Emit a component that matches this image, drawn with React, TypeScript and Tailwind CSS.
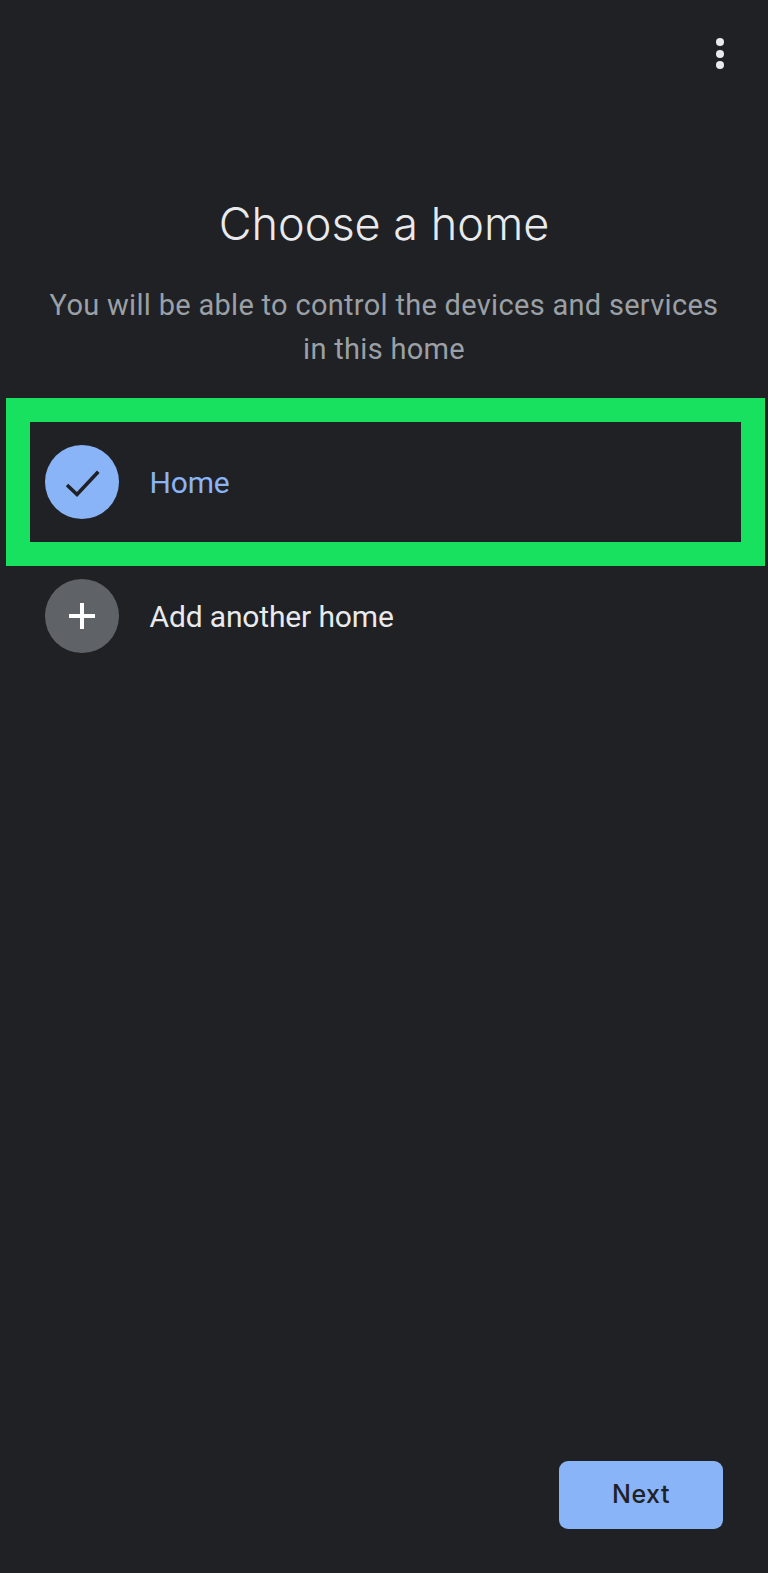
export default function App() {
  return (
    <div className="flex h-[1573px] w-[768px] flex-col bg-[#202124] font-['Roboto',sans-serif]">
      <header className="flex h-[198px] shrink-0 justify-end pr-[44px] pt-[38px]">
        <div className="flex flex-col gap-[3.5px]">
          <span className="h-2 w-2 rounded-full bg-[#e8eaed]" />
          <span className="h-2 w-2 rounded-full bg-[#e8eaed]" />
          <span className="h-2 w-2 rounded-full bg-[#e8eaed]" />
        </div>
      </header>
      <h1 className="text-center font-['Inter',sans-serif] text-[45px] font-[350] leading-[52px] text-[#e8eaed]">Choose a home</h1>
      <p className="mx-auto mt-[33px] w-[700px] text-center text-[29px] leading-[44px] tracking-[0.3px] text-[#9aa0a6]">
        You will be able to control the devices and services
        <br />
        in this home
      </p>
      <div className="ml-[6px] mt-[27px] flex h-[168px] w-[759px] items-center border-[24px] border-[#19e160] pl-[15px]">
        <div className="flex h-[74px] w-[74px] items-center justify-center rounded-full bg-[#8ab4f8]">
          <svg width="36" height="36" viewBox="0 0 36 36" fill="none" stroke="#202124" strokeWidth="3.6">
            <path d="M3 21 L13 30.5 L34.3 7.7" />
          </svg>
        </div>
        <span className="ml-[30.5px] text-[30px] tracking-[-0.15px] text-[#8ab4f8]">Home</span>
      </div>
      <div className="ml-[45px] mt-[13px] flex items-center">
        <div className="flex h-[74px] w-[74px] items-center justify-center rounded-full bg-[#5f6368]">
          <svg width="28" height="28" viewBox="0 0 28 28" fill="none" stroke="#ffffff" strokeWidth="4">
            <path d="M14 1 V27 M1 14 H27" />
          </svg>
        </div>
        <span className="ml-[30.5px] text-[30px] tracking-[-0.15px] text-[#e8eaed]">Add another home</span>
      </div>
      <div className="mt-auto flex justify-end pb-[44px] pr-[45px]">
        <button className="flex h-[68px] w-[164px] items-center justify-center rounded-[9px] bg-[#8ab4f8] font-['Inter',sans-serif] text-[25px] font-medium tracking-[0.5px] text-[#202124]">
          Next
        </button>
      </div>
    </div>
  );
}
